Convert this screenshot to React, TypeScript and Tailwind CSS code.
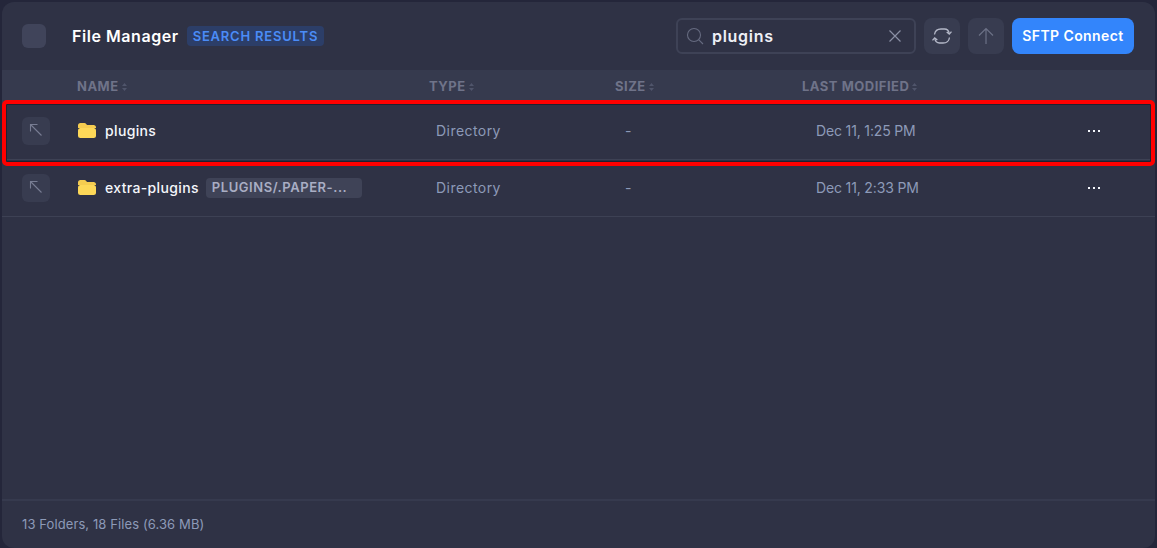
import React from "react";

const FONT = "font-['Inter','Noto_Sans',sans-serif]";

function Sort() {
  return (
    <svg width="5" height="8" viewBox="0 0 5 8" className="ml-[3px] mt-[1px]" fill="#50556b">
      <path d="M2.5 0 L5 3 H0 Z" />
      <path d="M2.5 8 L5 5 H0 Z" />
    </svg>
  );
}

function Head({ w, children }: { w: string; children: string }) {
  return (
    <div className={`flex items-center ${w} text-[13px] font-bold tracking-[0.5px] text-[#6f7389]`}>
      {children}
      <Sort />
    </div>
  );
}

function Folder() {
  return (
    <svg width="18" height="15" viewBox="0 0 18 15" className="shrink-0">
      <path d="M0 2.5 a2.5 2.5 0 0 1 2.5 -2.5 h4 a2 2 0 0 1 1.5 .7 l1 1.3 h6.5 a2.5 2.5 0 0 1 2.5 2.5 v.5 H0 Z" fill="#f5cc50" />
      <rect x="0" y="5" width="18" height="10" rx="2.5" fill="#fdd858" />
    </svg>
  );
}

function Row({ name, path, date }: { name: string; path?: string; date: string }) {
  return (
    <div className="flex h-[57px] items-center border-b border-[#3d4154] pl-5 pb-px text-[14px]">
      <div className="flex h-7 w-7 items-center justify-center rounded-md bg-[#383c50]">
        <svg width="16" height="16" viewBox="0 0 16 16" fill="none" stroke="#777c92" strokeWidth="1.1" className="-ml-px -mt-px">
          <path d="M13.5 13.5 L2.5 2.5 M2.5 9.5 V2.5 H9.5" />
        </svg>
      </div>
      <div className="ml-7 flex w-[358px] items-center">
        <Folder />
        <span className="ml-[9px] font-medium tracking-[0.35px] text-[#f4f6fb]">{name}</span>
        {path && (
          <span className="ml-[7px] flex h-5 w-[156px] items-center rounded bg-[#3f4357] pl-[6px] text-[13px] font-semibold tracking-[0.55px] text-[#a9aec4]">
            {path}
          </span>
        )}
      </div>
      <div className="w-[189px] tracking-[0.45px] text-[#8d9ab8]">Directory</div>
      <div className="w-[191px] text-[#8d9ab8]">-</div>
      <div className="w-[271px] tracking-[-0.15px] text-[#8d9ab8]">{date}</div>
      <svg width="14" height="4" viewBox="0 0 14 4" fill="#f4f6fb" className="shrink-0">
        <rect x="1" y="1" width="2" height="2" />
        <rect x="6" y="1" width="2" height="2" />
        <rect x="11" y="1" width="2" height="2" />
      </svg>
    </div>
  );
}

export default function App() {
  return (
    <div className={`relative h-[548px] w-[1157px] overflow-hidden bg-[#24263a] pl-[2px] pt-[2px] ${FONT}`}>
      <div className="flex h-[546px] w-[1153px] flex-col overflow-hidden rounded-xl bg-[#2f3245]">
        <div className="flex h-[68px] shrink-0 items-center pl-5 pr-[21px]">
          <div className="h-6 w-6 rounded-md bg-[#40445a]" />
          <div className="ml-[26px] text-[16px] font-semibold tracking-[0.55px] text-white">File Manager</div>
          <div className="ml-2 flex h-5 items-center rounded bg-[#2c3e68] px-[6px] pt-px text-[13px] font-semibold tracking-[0.8px] text-[#4b8cf7]">
            SEARCH RESULTS
          </div>
          <div className="ml-auto flex h-9 w-60 items-center rounded-md border-2 border-[#3e4256] pl-2 pr-[12px]">
            <svg width="18" height="18" viewBox="0 0 18 18" fill="none" stroke="#666b80" strokeWidth="1.1" className="shrink-0">
              <circle cx="8" cy="8" r="6.5" />
              <path d="M12.6 12.6 L17 17" />
            </svg>
            <span className="ml-[8px] text-[16px] font-semibold tracking-[0.7px] text-[#eef0f6]">plugins</span>
            <svg width="14" height="14" viewBox="0 0 14 14" fill="none" stroke="#8a8fa4" strokeWidth="1.2" className="ml-auto shrink-0">
              <path d="M1.5 1.5 L12.5 12.5 M12.5 1.5 L1.5 12.5" />
            </svg>
          </div>
          <div className="ml-2 flex h-9 w-9 items-center justify-center rounded-lg bg-[#383c50]">
            <svg width="20" height="18" viewBox="0 0 20 18" fill="none" stroke="#b4b8c8" strokeWidth="1.3">
              <path d="M2.5 7.5 C3 4 5.5 2 9 2 H12.5 C15 2 16.8 3.8 17.3 6.8" />
              <path d="M14.7 5 L17.3 7.2 L19.5 4.6" />
              <path d="M17.5 10.5 C17 14 14.5 16 11 16 H7.5 C5 16 3.2 14.2 2.7 11.2" />
              <path d="M5.3 13 L2.7 10.8 L0.5 13.4" />
            </svg>
          </div>
          <div className="ml-2 flex h-9 w-9 items-center justify-center rounded-lg bg-[#383c50]">
            <svg width="16" height="18" viewBox="0 0 16 18" fill="none" stroke="#6c7186" strokeWidth="1.2">
              <path d="M8 17 V1.5 M1 8.5 L8 1.5 L15 8.5" />
            </svg>
          </div>
          <div className="ml-2 flex h-9 w-[122px] items-center justify-center rounded-lg bg-[#3385fb] pb-px text-[14px] font-semibold tracking-[0.4px] text-white">
            SFTP Connect
          </div>
        </div>
        <div className="flex h-[33px] shrink-0 items-center bg-[#363a4e] pl-[75px]">
          <Head w="w-[352px]">NAME</Head>
          <Head w="w-[186px]">TYPE</Head>
          <Head w="w-[187px]">SIZE</Head>
          <Head w="w-[200px]">LAST MODIFIED</Head>
        </div>
        <Row name="plugins" date="Dec 11, 1:25 PM" />
        <Row name="extra-plugins" path="PLUGINS/.PAPER-..." date="Dec 11, 2:33 PM" />
        <div className="flex-1" />
        <div className="flex h-[49px] shrink-0 items-center border-t-2 border-[#363a4e] pl-5 text-[13px] tracking-[0.1px] text-[#8d9ab8]">
          13 Folders, 18 Files (6.36 MB)
        </div>
      </div>
      <div className="pointer-events-none absolute left-[2px] top-[100px] h-[66px] w-[1153px] rounded-[5px] border-4 border-[#ff0000] shadow-[inset_0_0_0_1px_#1f2130]" />
    </div>
  );
}
